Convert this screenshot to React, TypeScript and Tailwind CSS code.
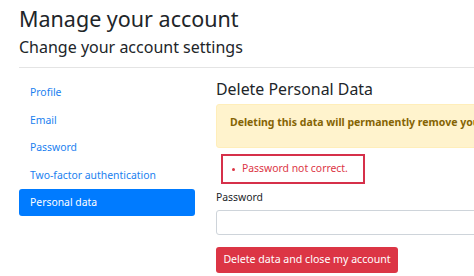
import React from 'react';

const navItems = ['Profile', 'Email', 'Password', 'Two-factor authentication', 'Personal data'];

export default function App() {
  return (
    <div
      className="w-[474px] h-[276px] overflow-hidden bg-white text-[#212529]"
      style={{ fontFamily: '"Noto Sans", "Open Sans", sans-serif' }}
    >
      <div className="pl-[19px] pt-[4px]">
        <h1 className="text-[21.5px] leading-[30px] font-normal">Manage your account</h1>
        <h2 className="text-[16px] leading-[22px] mt-[2px] font-normal">Change your account settings</h2>
        <hr className="mt-[9px] border-t border-[#e4e4e4] w-[460px]" />

        <div className="flex gap-[21px] mt-[10px]">
          {/* side nav */}
          <ul className="w-[176px] shrink-0 flex flex-col pt-[1.3px] text-[10.4px]">
            {navItems.map((item) => {
              const active = item === 'Personal data';
              return (
                <li
                  key={item}
                  className={
                    active
                      ? 'h-[27px] flex items-center px-[11px] rounded-[3px] bg-[#007bff] text-white'
                      : 'h-[27.5px] flex items-center px-[11px] text-[#1a7ff0]'
                  }
                >
                  {item}
                </li>
              );
            })}
          </ul>

          {/* content */}
          <div className="w-[420px] shrink-0">
            <h3 className="text-[15.9px] leading-[22px] font-normal">Delete Personal Data</h3>
            <div className="mt-[4px] h-[44px] bg-[#fff3cd] border border-[#ffeeba] rounded-[3px] px-[13px] pt-[9px] text-[10.5px] leading-[16px] font-bold text-[#856404] whitespace-nowrap">
              Deleting this data will permanently remove your account, and this cannot be recovered.
            </div>
            <div className="mt-[6px] ml-[5px] w-[144px] h-[30px] border-2 border-[#d6304a] flex items-center pl-[9px] text-[10.4px] text-[#dc3545]">
              <span className="w-[3px] h-[3px] rounded-full bg-[#dc3545] mr-[7px]" />
              Password not correct.
            </div>
            <label className="block mt-[4.7px] text-[10.4px] leading-[16px]">Password</label>
            <div className="mt-[5.3px] h-[25px] border border-[#ced4da] rounded-[3px] bg-white" />
            <button className="mt-[12px] h-[26px] w-[182px] rounded-[3px] bg-[#dc3545] text-white text-[10.6px] flex items-center justify-center whitespace-nowrap">
              Delete data and close my account
            </button>
          </div>
        </div>
      </div>
    </div>
  );
}
